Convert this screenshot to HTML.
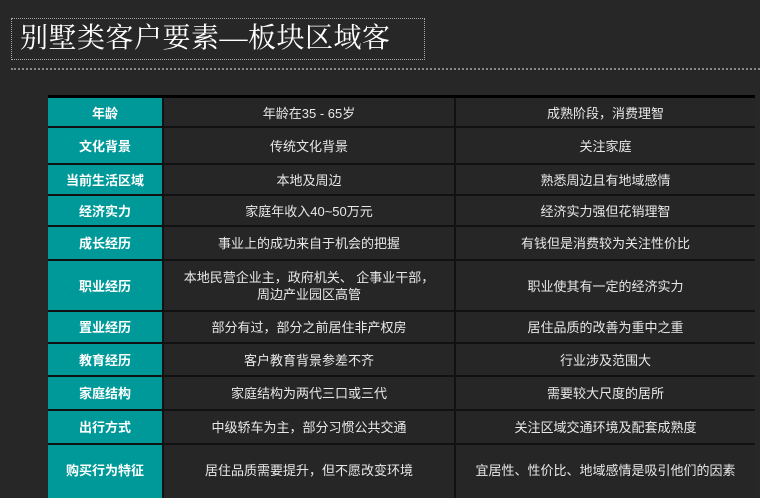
<!DOCTYPE html>
<html><head><meta charset="utf-8"><style>
body{margin:0;width:760px;height:488px;background:#272727;overflow:hidden;position:relative;font-family:"Liberation Sans","Noto Sans CJK SC",sans-serif;}
.title{position:absolute;left:11px;top:18px;width:404px;height:40px;border:1px dotted #aaa;color:#fff;font-family:"Liberation Serif","Noto Serif CJK SC",serif;font-size:28px;line-height:40px;padding-left:8px;box-sizing:content-box;letter-spacing:0.5px}
.hr{position:absolute;left:11px;top:68px;width:749px;border-top:2px dotted #888}
.r{position:absolute;left:48px;width:707px;display:flex;border-top:2px solid #111;box-sizing:border-box}
.c{display:flex;align-items:center;justify-content:center;text-align:center;font-size:13px;color:#e8e8e8;line-height:17px}
.a{width:114px;background:#009999;color:#fff;font-weight:bold;border-right:2px solid #111}
.b{width:290px;background:#262626;border-right:2px solid #111}
.d{flex:1;background:#262626}
</style></head><body>
<div class="title">别墅类客户要素—板块区域客</div>
<div class="hr"></div>
<div class="r" style="top:95px;height:33px;border-top:3px solid #000"><div class="c a">年龄</div><div class="c b">年龄在35 - 65岁</div><div class="c d">成熟阶段，消费理智</div></div>
<div class="r" style="top:126px;height:38px"><div class="c a">文化背景</div><div class="c b">传统文化背景</div><div class="c d">关注家庭</div></div>
<div class="r" style="top:163px;height:32px"><div class="c a">当前生活区域</div><div class="c b">本地及周边</div><div class="c d">熟悉周边且有地域感情</div></div>
<div class="r" style="top:194px;height:32px"><div class="c a">经济实力</div><div class="c b">家庭年收入40~50万元</div><div class="c d">经济实力强但花销理智</div></div>
<div class="r" style="top:225px;height:35px"><div class="c a">成长经历</div><div class="c b">事业上的成功来自于机会的把握</div><div class="c d">有钱但是消费较为关注性价比</div></div>
<div class="r" style="top:259px;height:52px"><div class="c a">职业经历</div><div class="c b">本地民营企业主，政府机关、 企事业干部，<br>周边产业园区高管</div><div class="c d">职业使其有一定的经济实力</div></div>
<div class="r" style="top:310px;height:33px"><div class="c a">置业经历</div><div class="c b">部分有过，部分之前居住非产权房</div><div class="c d">居住品质的改善为重中之重</div></div>
<div class="r" style="top:342px;height:34px"><div class="c a">教育经历</div><div class="c b">客户教育背景参差不齐</div><div class="c d">行业涉及范围大</div></div>
<div class="r" style="top:375px;height:35px"><div class="c a">家庭结构</div><div class="c b">家庭结构为两代三口或三代</div><div class="c d">需要较大尺度的居所</div></div>
<div class="r" style="top:409px;height:35px"><div class="c a">出行方式</div><div class="c b">中级轿车为主，部分习惯公共交通</div><div class="c d">关注区域交通环境及配套成熟度</div></div>
<div class="r" style="top:443px;height:55px"><div class="c a" style="padding-bottom:2px">购买行为特征</div><div class="c b" style="padding-bottom:2px">居住品质需要提升，但不愿改变环境</div><div class="c d" style="padding-bottom:2px">宜居性、性价比、地域感情是吸引他们的因素</div></div>
</body></html>
